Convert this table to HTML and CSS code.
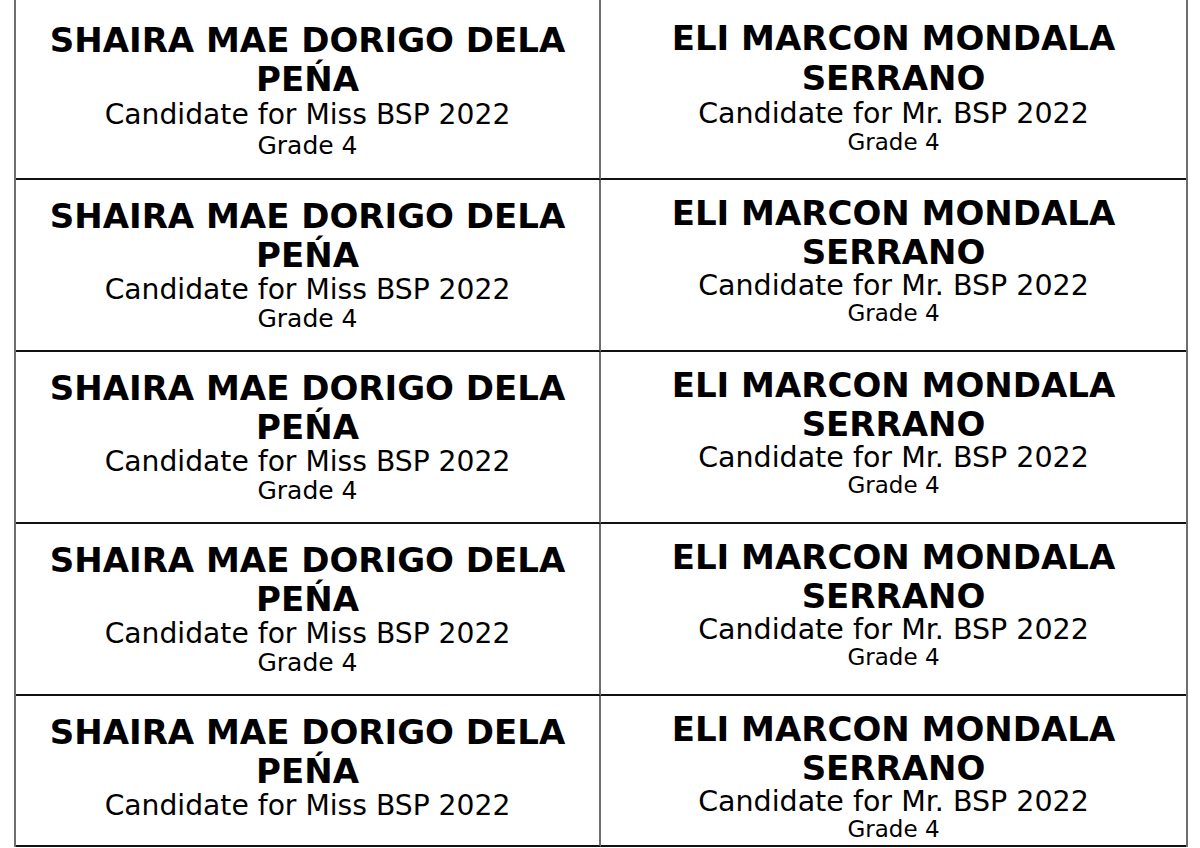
FILE: index.html
```html
<!DOCTYPE html>
<html>
<head>
<meta charset="utf-8">
<link rel="stylesheet" href="styles.css">
</head>
<body>
<div class="sheet">
  <div class="cell left first"><div class="name">SHAIRA MAE DORIGO DELA PEŃA</div><div class="role">Candidate for Miss BSP 2022</div><div class="grade">Grade 4</div></div>
  <div class="cell right first"><div class="name">ELI MARCON MONDALA SERRANO</div><div class="role">Candidate for Mr. BSP 2022</div><div class="grade">Grade 4</div></div>
  <div class="cell left"><div class="name">SHAIRA MAE DORIGO DELA PEŃA</div><div class="role">Candidate for Miss BSP 2022</div><div class="grade">Grade 4</div></div>
  <div class="cell right"><div class="name">ELI MARCON MONDALA SERRANO</div><div class="role">Candidate for Mr. BSP 2022</div><div class="grade">Grade 4</div></div>
  <div class="cell left"><div class="name">SHAIRA MAE DORIGO DELA PEŃA</div><div class="role">Candidate for Miss BSP 2022</div><div class="grade">Grade 4</div></div>
  <div class="cell right"><div class="name">ELI MARCON MONDALA SERRANO</div><div class="role">Candidate for Mr. BSP 2022</div><div class="grade">Grade 4</div></div>
  <div class="cell left"><div class="name">SHAIRA MAE DORIGO DELA PEŃA</div><div class="role">Candidate for Miss BSP 2022</div><div class="grade">Grade 4</div></div>
  <div class="cell right"><div class="name">ELI MARCON MONDALA SERRANO</div><div class="role">Candidate for Mr. BSP 2022</div><div class="grade">Grade 4</div></div>
  <div class="cell left last"><div class="name">SHAIRA MAE DORIGO DELA PEŃA</div><div class="role">Candidate for Miss BSP 2022</div></div>
  <div class="cell right last"><div class="name">ELI MARCON MONDALA SERRANO</div><div class="role">Candidate for Mr. BSP 2022</div><div class="grade">Grade 4</div></div>
</div>
</body>
</html>
```
FILE: styles.css
```css
html, body {
  margin: 0;
  padding: 0;
  background: #ffffff;
}
body {
  font-family: "DejaVu Sans", sans-serif;
  color: #000;
  height: 848px;
  overflow: hidden;
}
.sheet {
  display: grid;
  grid-template-columns: 585px 585px;
  grid-template-rows: 180px 172px 172px 172px 151px;
  width: 1170px;
  margin-left: 14px;
  border-left: 2px solid #6e6e72;
  border-right: 2px solid #6e6e72;
}
.cell {
  box-sizing: border-box;
  border-bottom: 2px solid #111;
  display: flex;
  flex-direction: column;
  align-items: center;
  text-align: center;
  padding: 17px 10px 0;
  overflow: hidden;
}
.left {
  border-right: 2px solid #6e6e72;
}
.right {
  padding-top: 14px;
}
.left.first {
  padding-top: 21px;
}
.right.first {
  padding-top: 18px;
}
.name {
  font-weight: bold;
  font-size: 34px;
  line-height: 39px;
  width: 560px;
}
.role {
  font-size: 28.2px;
  line-height: 29px;
}
.grade {
  font-size: 25px;
  line-height: 30px;
}
.right .role {
  font-size: 28.5px;
  line-height: 28px;
}
.right .grade {
  font-size: 23px;
  line-height: 27px;
}
.left.first .role {
  margin-top: 1px;
}
.left.first .grade {
  margin-top: 2px;
}
.right.first .name {
  line-height: 40px;
}
.right.first .role {
  margin-top: 2px;
}
.right.first .grade {
  margin-top: 1px;
}
```
